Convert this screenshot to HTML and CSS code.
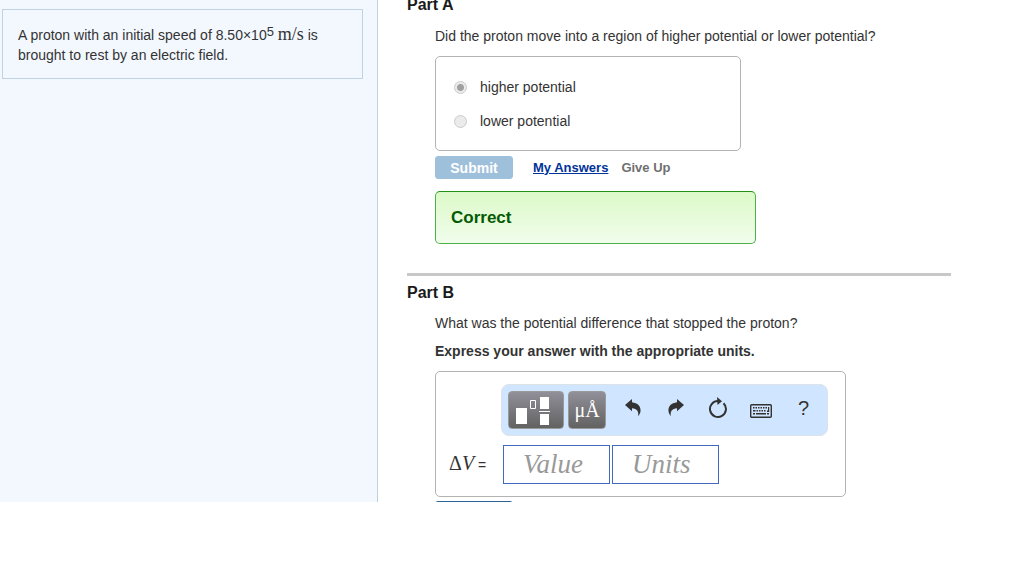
FILE: index.html
```html
<!DOCTYPE html>
<html lang="en">
<head>
    <meta charset="UTF-8">
    <meta name="viewport" content="width=device-width, initial-scale=1.0">
    <title>Proton in an Electric Field</title>
    <link rel="stylesheet" href="styles.css">
</head>
<body>
    <div class="assignment">
        <aside class="sidebar">
            <div class="problem">
                A proton with an initial speed of 8.50×10<sup>5</sup> <span class="math">m/s</span> is brought to rest by an electric field.
            </div>
        </aside>
        <main class="parts">
            <section class="part">
                <h2>Part A</h2>
                <form class="part-body">
                    <p class="question">Did the proton move into a region of higher potential or lower potential?</p>
                    <div class="choices">
                        <label><input type="radio" name="potential" checked disabled>higher potential</label>
                        <label><input type="radio" name="potential" disabled>lower potential</label>
                    </div>
                    <div class="actions">
                        <button class="submit done" type="button" disabled>Submit</button>
                        <a class="my-answers" href="#answers">My Answers</a>
                        <span class="give-up">Give Up</span>
                    </div>
                    <div class="feedback">Correct</div>
                </form>
            </section>
            <section class="part part-b">
                <h2>Part B</h2>
                <form class="part-body">
                    <p class="question">What was the potential difference that stopped the proton?</p>
                    <p class="instructions">Express your answer with the appropriate units.</p>
                    <div class="answer">
                        <div class="toolbar">
                            <button class="tool templates" type="button" aria-label="Templates">
                                <svg width="40" height="30" viewBox="0 0 40 30">
                                    <path fill="#fff" d="M0 13h11v16H0zM24 2h9v12h-9zM24 19h9v11h-9zM23 16h11v1H23z"/>
                                    <path fill="none" stroke="#fff" d="M14.500 5.500h5v8h-5z"/>
                                </svg>
                            </button>
                            <button class="tool symbols" type="button" aria-label="Units symbols">μÅ</button>
                            <button class="icon" type="button" aria-label="Undo">
                                <svg width="16" height="18" viewBox="0 0 16 18">
                                    <path d="M0 6 7 0v3.200C12.500 4 16 7 15.500 12c-.2 2-1 3.800-2.400 5.300C14 12.500 12 9.400 7 9.200v3z"/>
                                </svg>
                            </button>
                            <button class="icon" type="button" aria-label="Redo">
                                <svg width="16" height="18" viewBox="0 0 16 18">
                                    <path d="M16 6 9 0v3.200C3.500 4 0 7 .5 12c.2 2 1 3.800 2.400 5.300C2 12.500 4 9.400 9 9.200v3z"/>
                                </svg>
                            </button>
                            <button class="icon" type="button" aria-label="Reset">
                                <svg width="20" height="22" viewBox="0 0 20 22">
                                    <path fill="none" stroke="#333" stroke-width="2" d="M15.500 6.200A8 8 0 1 1 10.500 4"/>
                                    <path d="M9 0l5 4.200-4.500 3.800z"/>
                                </svg>
                            </button>
                            <button class="icon" type="button" aria-label="Keyboard">
                                <svg class="keyboard" width="22" height="14" viewBox="0 0 22 14">
                                    <rect x=".7" y=".7" width="20.600" height="12.600" rx="1" fill="none" stroke="#333" stroke-width="1.400"/>
                                    <path d="M3 3h1.500v1.500H3zM5.500 3H7v1.500H5.500zM8 3h1.500v1.500H8zM10.500 3H12v1.500h-1.500zM13 3h1.500v1.500H13zM15.500 3H17v1.500h-1.500zM18 3h1.200v5h-2.200V6.500h1zM3 6h2.500v1.500H3zM6.500 6H8v1.500H6.500zM9 6h1.500v1.500H9zM11.500 6H13v1.500h-1.500zM14 6h1.500v1.500H14zM3 9h2v1.500H3zM6 9h10v1.500H6zM17 9h2v1.500h-2z"/>
                                </svg>
                            </button>
                            <button class="icon help" type="button" aria-label="Help">?</button>
                        </div>
                        <div class="entry">
                            <label for="value"><span class="math">Δ<i>V</i></span> =</label>
                            <input id="value" type="text" placeholder="Value">
                            <input id="units" type="text" placeholder="Units" aria-label="Units">
                        </div>
                    </div>
                    <div class="actions actions-b">
                        <button class="submit" type="button">Submit</button>
                    </div>
                </form>
            </section>
        </main>
    </div>
</body>
</html>
```

FILE: styles.css
```css
* {
    box-sizing: border-box;
}
body {
    margin: 0;
    background: #fff;
    color: #333;
    font-family: "Liberation Sans", Arial, sans-serif;
    font-size: 14px;
    line-height: 20px;
}
h2, p {
    margin: 0;
}
button, input {
    font-family: inherit;
    margin: 0;
}
.assignment {
    display: flex;
    height: calc(100vh - 74px);
    overflow: hidden;
}
.sidebar {
    flex: 0 0 378px;
    padding: 9px 14px 0 2px;
    background: #f3f8ff;
    border-right: 1px solid #bfd0e0;
}
.problem {
    padding: 15px 14px 13px 15px;
    border: 1px solid #bfd3e4;
}
.problem sup {
    font-size: 13px;
    line-height: 0;
    vertical-align: 4px;
}
.math {
    font-family: "Liberation Serif", "Times New Roman", serif;
    font-size: 18px;
    line-height: 18px;
}
.parts {
    flex: 1;
    padding: 0 73px 0 29px;
}
h2 {
    color: #1a1a1a;
    font-size: 16px;
    line-height: 20px;
}
.part:first-child h2 {
    margin-top: -5px;
}
.part-b {
    margin-top: 28px;
    padding-top: 7px;
    border-top: 3px solid #c8c8c8;
}
.part-body {
    padding: 11px 0 0 28px;
}
.choices {
    width: 306px;
    height: 95px;
    margin-top: 10px;
    padding: 20px 18px;
    border: 1px solid #b3b3b3;
    border-radius: 5px;
}
.choices label {
    display: flex;
    align-items: center;
    margin-bottom: 14px;
}
.choices input {
    appearance: none;
    width: 13px;
    height: 13px;
    margin-right: 13px;
    border: 1px solid #ccc;
    border-radius: 50%;
    background: #ebebeb;
}
.choices input:checked {
    background: radial-gradient(circle, #a0a0a0 3px, #ebebeb 4px);
}
.actions {
    display: flex;
    align-items: center;
    margin-top: 5px;
    font-size: 13px;
    font-weight: bold;
}
.submit {
    width: 78px;
    height: 23px;
    padding: 0;
    border: 1px solid #2a6496;
    border-radius: 3px;
    background: #3a7cab;
    color: #fff;
    font-size: 14px;
    font-weight: bold;
}
.submit.done {
    border-color: #9fc0da;
    background: #9fc0da;
}
.my-answers {
    margin: 0 13px 0 20px;
    color: #003399;
}
.give-up {
    color: #707070;
}
.feedback {
    width: 321px;
    margin-top: 12px;
    padding: 15px;
    border: 1px solid #4fb04a;
    border-top-color: #239018;
    border-radius: 5px;
    background: linear-gradient(#dcfac8, #f1fdec);
    color: #045a04;
    font-size: 17px;
    font-weight: bold;
    line-height: 21px;
}
.part-b {
    margin-top: 29px;
}
.part-b .part-body {
    padding-top: 10px;
}
.instructions {
    margin-top: 8px;
    font-weight: bold;
}
.answer {
    width: 411px;
    margin-top: 10px;
    padding: 12px 13px;
    border: 1px solid #b3b3b3;
    border-radius: 5px;
}
.toolbar {
    display: flex;
    align-items: center;
    width: 327px;
    height: 52px;
    margin-left: 52px;
    padding: 0 2px 0 6px;
    border: 1px solid #dbe2e8;
    border-radius: 8px;
    background: #d0e5ff;
}
.tool {
    height: 38px;
    padding: 0;
    border: 1px solid #999;
    border-radius: 4px;
    background: linear-gradient(#918f98, #626262);
    color: #fff;
}
.templates {
    width: 56px;
    margin-right: 4px;
}
.tool svg {
    display: block;
    margin: 0 auto;
}
.symbols {
    width: 38px;
    margin-right: 6px;
    font-family: "Liberation Serif", "Times New Roman", serif;
    font-size: 20px;
}
.icon {
    display: flex;
    flex: 1;
    align-items: center;
    justify-content: center;
    padding: 0 0 4px;
    border: 0;
    background: none;
    color: #333;
}
.icon svg {
    fill: #333;
}
.keyboard {
    margin-top: 6px;
}
.help {
    font-size: 20px;
}
.entry {
    display: flex;
    align-items: center;
    margin-top: 9px;
}
.entry label {
    width: 54px;
}
.entry .math {
    font-size: 20px;
}
.entry input {
    width: 107px;
    height: 39px;
    margin-right: 2px;
    padding: 0 19px;
    border: 1px solid #4169c0;
    font-family: "Liberation Serif", "Times New Roman", serif;
    font-size: 27px;
    font-style: italic;
}
.entry input::placeholder {
    color: #999;
    opacity: 1;
}
.actions-b {
    margin-top: 4px;
}
```
